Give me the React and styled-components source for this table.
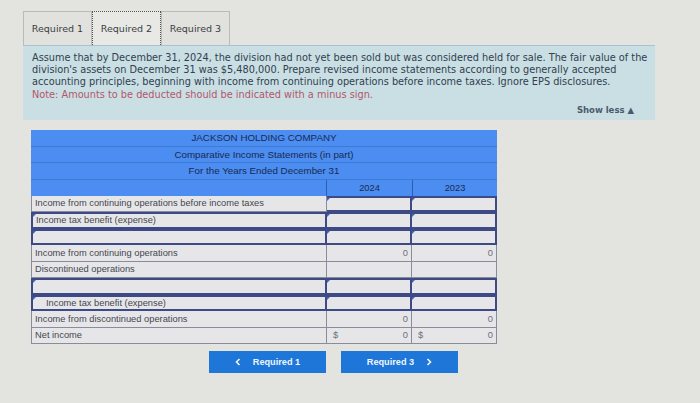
import React from "react";
import styled, { createGlobalStyle } from "styled-components";

const GlobalStyle = createGlobalStyle`
  html, body {
    margin: 0;
    padding: 0;
    background: #e3e4df;
  }
  body {
    font-family: "DejaVu Sans", Verdana, sans-serif;
  }
`;

const Page = styled.div`
  width: 700px;
  height: 403px;
  padding: 11px 0 0 23px;
  box-sizing: border-box;
  overflow: hidden;
`;

const Tabs = styled.div`
  display: flex;
  height: 34px;
`;

const Tab = styled.div`
  width: 69px;
  display: flex;
  align-items: center;
  justify-content: center;
  font-size: 9.5px;
  color: #3a3d44;
  border: 1px ${(p) => (p.active ? "dotted #555" : "solid #b9bbb6")};
  border-bottom: none;
  background: ${(p) => (p.active ? "#e8e9e4" : "#e1e2dd")};
  box-sizing: border-box;
`;

const Prompt = styled.div`
  width: 632px;
  height: 75px;
  box-sizing: border-box;
  background: #c9dfe4;
  border-top: 1px solid #a9c3cc;
  padding: 6px 4px 0 9px;
  font-size: 9.75px;
  line-height: 12.2px;
  color: #33404f;
  display: flex;
  flex-direction: column;
`;

const PromptText = styled.div`
  white-space: nowrap;
`;

const Note = styled.span`
  color: #b4566a;
`;

const ShowLess = styled.div`
  align-self: flex-end;
  margin-top: 3px;
  margin-right: 17px;
  font-size: 8.5px;
  font-weight: bold;
  color: #4a5a6e;
`;

const Table = styled.div`
  margin: 10px 0 0 8px;
  width: 467px;
  display: grid;
  grid-template-columns: 296px 85px 85px;
  font-family: "Liberation Sans", Arial, sans-serif;
  font-size: 9.3px;
`;

const HeadRow = styled.div`
  grid-column: 1 / -1;
  height: 16.5px;
  background: #4b8df0;
  border-bottom: 1px solid #3e79d6;
  color: #1a2a50;
  font-size: 9.8px;
  display: flex;
  align-items: center;
  justify-content: center;
  box-sizing: border-box;
`;

const HeadBlank = styled.div`
  height: 16px;
  background: #4b8df0;
  border-right: 1px solid #2c5cb5;
`;

const HeadYear = styled.div`
  height: 16px;
  background: #4b8df0;
  color: #1a2a50;
  display: flex;
  align-items: center;
  justify-content: center;
  border-left: ${(p) => (p.first ? "none" : "1px solid #2c5cb5")};
  box-sizing: border-box;
`;

const Label = styled.div`
  height: 16.5px;
  box-sizing: border-box;
  display: flex;
  align-items: center;
  padding-left: ${(p) => (p.indent ? "13px" : "3px")};
  color: #44474f;
  background: #e6e6e8;
  border-style: solid;
  border-width: ${(p) => (p.input ? "2px" : "0 1px 1px 1px")};
  border-color: ${(p) => (p.input ? "#3e4a86" : "#8a8c9c")};
  position: relative;
`;

const Cell = styled.div`
  height: 16.5px;
  box-sizing: border-box;
  display: flex;
  align-items: center;
  justify-content: space-between;
  padding: 0 3px 0 6px;
  color: #6d7079;
  background: #e6e6e8;
  border-style: solid;
  border-width: ${(p) => (p.input ? "2px 2px 2px 0" : "0 1px 1px 0")};
  border-color: ${(p) => (p.input ? "#3e4a86" : "#8a8c9c")};
  position: relative;
`;

const Marker = styled.span`
  position: absolute;
  left: 0;
  top: 0;
  width: 0;
  height: 0;
  border-top: 3px solid #3f62c4;
  border-right: 3px solid transparent;
`;

const Buttons = styled.div`
  display: flex;
  gap: 15px;
  margin: 7px 0 0 186px;
`;

const NavButton = styled.button`
  width: 117px;
  height: 22px;
  background: #1d76d8;
  border: none;
  color: #eef4fc;
  font-family: "Liberation Sans", Arial, sans-serif;
  font-weight: bold;
  font-size: 9.2px;
  display: flex;
  align-items: center;
  justify-content: center;
  gap: 12px;
  padding: 0;
`;

const Chevron = ({ dir }) => (
  <svg width="6" height="8" viewBox="0 0 6 8">
    <path
      d={dir === "left" ? "M4.5 1 L1.5 4 L4.5 7" : "M1.5 1 L4.5 4 L1.5 7"}
      fill="none"
      stroke="#eef4fc"
      strokeWidth="1.6"
    />
  </svg>
);

const rows = [
  { label: "Income from continuing operations before income taxes", input: true, top: true },
  { label: "Income tax benefit (expense)", input: true },
  { label: "", input: true },
  { label: "Income from continuing operations", a: "0", b: "0" },
  { label: "Discontinued operations" },
  { label: "", input: true },
  { label: "Income tax benefit (expense)", input: true, indent: true },
  { label: "Income from discontinued operations", a: "0", b: "0" },
  { label: "Net income", a: "0", b: "0", dollar: true },
];

export default function App() {
  return (
    <Page>
      <GlobalStyle />
      <Tabs>
        <Tab>Required 1</Tab>
        <Tab active>Required 2</Tab>
        <Tab>Required 3</Tab>
      </Tabs>
      <Prompt>
        <PromptText>
          Assume that by December 31, 2024, the division had not yet been sold but was considered held for sale. The fair value of the
          <br />
          division's assets on December 31 was $5,480,000. Prepare revised income statements according to generally accepted
          <br />
          accounting principles, beginning with income from continuing operations before income taxes. Ignore EPS disclosures.
          <br />
          <Note>Note: Amounts to be deducted should be indicated with a minus sign.</Note>
        </PromptText>
        <ShowLess>Show less ▲</ShowLess>
      </Prompt>
      <Table>
        <HeadRow>JACKSON HOLDING COMPANY</HeadRow>
        <HeadRow>Comparative Income Statements (in part)</HeadRow>
        <HeadRow>For the Years Ended December 31</HeadRow>
        <HeadBlank />
        <HeadYear first>2024</HeadYear>
        <HeadYear>2023</HeadYear>
        {rows.map((r, i) => (
          <React.Fragment key={i}>
            <Label input={r.input && !r.top ? 1 : 0} indent={r.indent ? 1 : 0}>
              {r.input && !r.top && <Marker />}
              {r.label}
            </Label>
            <Cell input={r.input ? 1 : 0}>
              {r.input && <Marker />}
              <span>{r.dollar ? "$" : ""}</span>
              <span>{r.a || ""}</span>
            </Cell>
            <Cell input={r.input ? 1 : 0}>
              {r.input && <Marker />}
              <span>{r.dollar ? "$" : ""}</span>
              <span>{r.b || ""}</span>
            </Cell>
          </React.Fragment>
        ))}
      </Table>
      <Buttons>
        <NavButton>
          <Chevron dir="left" />
          <span>Required 1</span>
        </NavButton>
        <NavButton>
          <span>Required 3</span>
          <Chevron dir="right" />
        </NavButton>
      </Buttons>
    </Page>
  );
}
